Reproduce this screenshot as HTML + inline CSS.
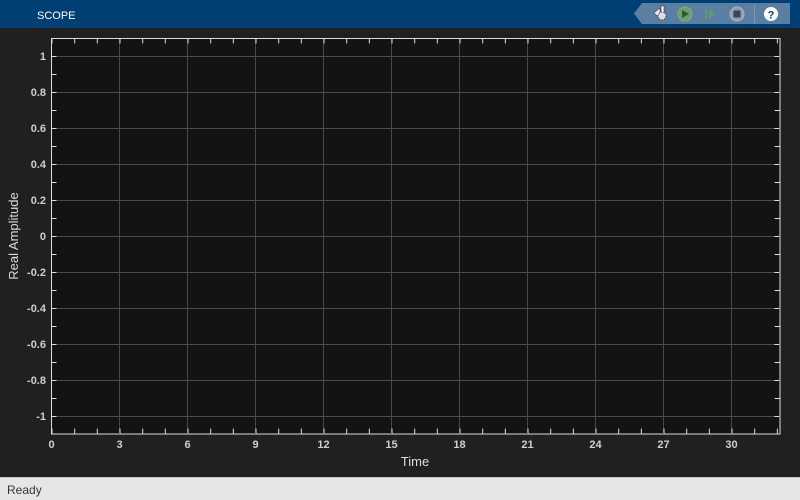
<!DOCTYPE html>
<html><head><style>
body{margin:0;width:800px;height:500px;overflow:hidden;background:#202020;font-family:"Liberation Sans",sans-serif}
</style></head><body>
<svg width="800" height="500" xmlns="http://www.w3.org/2000/svg" style="position:absolute;left:0;top:0">
<rect x="0" y="0" width="800" height="28" fill="#003f73"/>
<text x="37" y="19" font-size="11" fill="#ffffff" font-family="Liberation Sans, sans-serif">SCOPE</text>
<polygon points="642,3 790,3 790,24 642,24 634,13.5" fill="#5b7fa3"/>
<g>
<path d="M660,8 L654,13 L660,18 Z" fill="#e8eef4" stroke="#223" stroke-width="0.5"/>
<rect x="661" y="6" width="3" height="8" fill="#fff" stroke="#333" stroke-width="0.6"/>
<circle cx="662" cy="16" r="4" fill="#ddd" stroke="#333" stroke-width="0.8" stroke-dasharray="1.5 1"/>
<circle cx="685" cy="14" r="7" fill="#6e9e6e" stroke="#7fb07f"/>
<path d="M682,10 L689,14 L682,18 Z" fill="#2e5e2e"/>
<rect x="705" y="9" width="2" height="10" fill="#5f9a6a"/>
<path d="M709,9 L716,14 L709,19 Z" fill="#5f9a6a"/>
<circle cx="737" cy="14" r="7" fill="#8ea0b3" stroke="#a9b6c4"/>
<rect x="733.5" y="10.5" width="7" height="7" fill="#3a4655"/>
<rect x="754" y="5" width="1" height="18" fill="#7f9ab5"/>
<circle cx="771" cy="14" r="7" fill="#fff"/>
<text x="771" y="18.5" font-size="11" font-weight="bold" text-anchor="middle" fill="#003f73">?</text>
</g>
<rect x="51.5" y="38.5" width="728.5" height="395.5" fill="#131313" stroke="#dcdcdc" stroke-width="1"/>
<g stroke="#4a4a4a" stroke-width="1">
<path d="M119.5,39V434M187.5,39V434M255.5,39V434M323.5,39V434M391.5,39V434M459.5,39V434M527.5,39V434M595.5,39V434M663.5,39V434M731.5,39V434"/>
<path d="M52,56.5H780M52,92.5H780M52,128.5H780M52,164.5H780M52,200.5H780M52,236.5H780M52,272.5H780M52,308.5H780M52,344.5H780M52,380.5H780M52,416.5H780"/>
</g>
<g stroke="#dcdcdc">
<line x1="51.5" y1="431" x2="780" y2="431" stroke-width="5" stroke-dasharray="1 21.667"/>
<line x1="51.5" y1="41" x2="780" y2="41" stroke-width="5" stroke-dasharray="1 21.667"/>
<line x1="54" y1="38" x2="54" y2="434" stroke-width="5" stroke-dasharray="1 17"/>
<line x1="777" y1="38" x2="777" y2="434" stroke-width="5" stroke-dasharray="1 17"/>
</g>
<g font-size="11" font-weight="bold" fill="#cfcfcf" text-anchor="end" font-family="Liberation Sans, sans-serif">
<text x="46" y="60">1</text><text x="46" y="96">0.8</text><text x="46" y="132">0.6</text><text x="46" y="168">0.4</text><text x="46" y="204">0.2</text><text x="46" y="240">0</text><text x="46" y="276">-0.2</text><text x="46" y="312">-0.4</text><text x="46" y="348">-0.6</text><text x="46" y="384">-0.8</text><text x="46" y="420">-1</text>
</g>
<g font-size="11" font-weight="bold" fill="#cfcfcf" text-anchor="middle" font-family="Liberation Sans, sans-serif">
<text x="51.5" y="448">0</text><text x="119.5" y="448">3</text><text x="187.5" y="448">6</text><text x="255.5" y="448">9</text><text x="323.5" y="448">12</text><text x="391.5" y="448">15</text><text x="459.5" y="448">18</text><text x="527.5" y="448">21</text><text x="595.5" y="448">24</text><text x="663.5" y="448">27</text><text x="731.5" y="448">30</text>
</g>
<text x="415" y="466" font-size="13" fill="#dcdcdc" text-anchor="middle" font-family="Liberation Sans, sans-serif">Time</text>
<text transform="translate(18,236) rotate(-90)" font-size="13" fill="#dcdcdc" text-anchor="middle" font-family="Liberation Sans, sans-serif">Real Amplitude</text>
<rect x="0" y="477" width="800" height="23" fill="#e6e6e6"/>
<rect x="0" y="477" width="800" height="1" fill="#c8c8c8"/>
<text x="7" y="494" font-size="12" fill="#333" font-family="Liberation Sans, sans-serif">Ready</text>
</svg>
</body></html>
